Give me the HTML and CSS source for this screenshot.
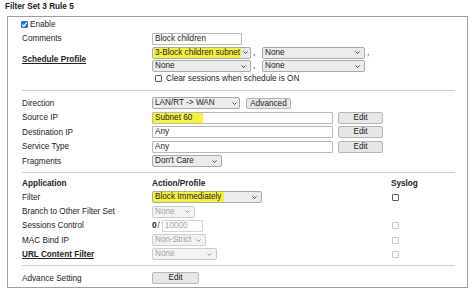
FILE: index.html
```html
<!DOCTYPE html>
<html>
<head>
<meta charset="utf-8">
<link rel="stylesheet" href="styles.css">
</head>
<body>
<div class="title">Filter Set 3 Rule 5</div>
<div class="panel">
  <div class="sec s1">
    <div class="row r-enable">
      <span class="cb on"><svg viewBox="0 0 7 7" width="7" height="7"><polyline points="1.3,3.6 2.9,5.2 5.8,1.7" fill="none" stroke="#fff" stroke-width="1.3"/></svg></span>
      <span class="enable-txt">Enable</span>
    </div>
    <div class="row r-comments">
      <div class="lbl">Comments</div>
      <div class="inp w-comments">Block children</div>
    </div>
    <div class="row r-sched">
      <div class="lbl bu">Schedule Profile</div>
      <div class="sched">
        <div class="sline">
          <div class="sel w-s1 tight"><span class="hl hl-s1">3-Block children subnet</span><svg class="chev" viewBox="0 0 5 3" width="5" height="3"><polyline points="0.5,0.5 2.5,2.5 4.5,0.5" fill="none" stroke="#333" stroke-width="0.9"/></svg></div>
          <span class="comma">,</span>
          <div class="sel w-s2"><span>None</span><svg class="chev" viewBox="0 0 5 3" width="5" height="3"><polyline points="0.5,0.5 2.5,2.5 4.5,0.5" fill="none" stroke="#333" stroke-width="0.9"/></svg></div>
          <span class="comma">,</span>
        </div>
        <div class="sline">
          <div class="sel w-s1"><span>None</span><svg class="chev" viewBox="0 0 5 3" width="5" height="3"><polyline points="0.5,0.5 2.5,2.5 4.5,0.5" fill="none" stroke="#333" stroke-width="0.9"/></svg></div>
          <span class="comma">,</span>
          <div class="sel w-s2"><span>None</span><svg class="chev" viewBox="0 0 5 3" width="5" height="3"><polyline points="0.5,0.5 2.5,2.5 4.5,0.5" fill="none" stroke="#333" stroke-width="0.9"/></svg></div>
        </div>
      </div>
    </div>
    <div class="row r-clear">
      <div class="lbl"></div>
      <span class="cb clear-cb"></span>
      <span>Clear sessions when schedule is ON</span>
    </div>
  </div>

  <div class="sec s2">
    <div class="row r2">
      <div class="lbl">Direction</div>
      <div class="sel w-dir tight"><span>LAN/RT -&gt; WAN</span><svg class="chev" viewBox="0 0 5 3" width="5" height="3"><polyline points="0.5,0.5 2.5,2.5 4.5,0.5" fill="none" stroke="#333" stroke-width="0.9"/></svg></div>
      <div class="btn w-adv">Advanced</div>
    </div>
    <div class="row r2">
      <div class="lbl">Source IP</div>
      <div class="inp w-ip hlwrap"><span class="hl hl-ip">Subnet 60</span></div>
      <div class="btn w-edit">Edit</div>
    </div>
    <div class="row r2">
      <div class="lbl">Destination IP</div>
      <div class="inp w-ip">Any</div>
      <div class="btn w-edit">Edit</div>
    </div>
    <div class="row r2">
      <div class="lbl">Service Type</div>
      <div class="inp w-ip">Any</div>
      <div class="btn w-edit">Edit</div>
    </div>
    <div class="row r2">
      <div class="lbl">Fragments</div>
      <div class="sel w-frag"><span>Don't Care</span><svg class="chev" viewBox="0 0 5 3" width="5" height="3"><polyline points="0.5,0.5 2.5,2.5 4.5,0.5" fill="none" stroke="#333" stroke-width="0.9"/></svg></div>
    </div>
  </div>

  <div class="sec s3">
    <div class="row3 head">
      <div class="lbl b">Application</div>
      <div class="act b">Action/Profile</div>
      <div class="sys b">Syslog</div>
    </div>
    <div class="row3">
      <div class="lbl">Filter</div>
      <div class="act"><div class="sel w-filter hlsel"><span class="hl hl-filter">Block Immediately</span><svg class="chev" viewBox="0 0 5 3" width="5" height="3"><polyline points="0.5,0.5 2.5,2.5 4.5,0.5" fill="none" stroke="#333" stroke-width="0.9"/></svg></div></div>
      <div class="sys"><span class="cb"></span></div>
    </div>
    <div class="row3">
      <div class="lbl">Branch to Other Filter Set</div>
      <div class="act"><div class="sel dis w-branch"><span>None</span><svg class="chev" viewBox="0 0 5 3" width="5" height="3"><polyline points="0.5,0.5 2.5,2.5 4.5,0.5" fill="none" stroke="#888" stroke-width="0.9"/></svg></div></div>
      <div class="sys"></div>
    </div>
    <div class="row3">
      <div class="lbl">Sessions Control</div>
      <div class="act"><span class="b">0</span><span class="slash">/</span><div class="inp dis w-sess">10000</div></div>
      <div class="sys"><span class="cb dis"></span></div>
    </div>
    <div class="row3">
      <div class="lbl">MAC Bind IP</div>
      <div class="act"><div class="sel dis w-mac"><span>Non-Strict</span><svg class="chev" viewBox="0 0 5 3" width="5" height="3"><polyline points="0.5,0.5 2.5,2.5 4.5,0.5" fill="none" stroke="#888" stroke-width="0.9"/></svg></div></div>
      <div class="sys"><span class="cb dis"></span></div>
    </div>
    <div class="row3">
      <div class="lbl bu">URL Content Filter</div>
      <div class="act"><div class="sel dis w-url"><span>None</span><svg class="chev" viewBox="0 0 5 3" width="5" height="3"><polyline points="0.5,0.5 2.5,2.5 4.5,0.5" fill="none" stroke="#888" stroke-width="0.9"/></svg></div></div>
      <div class="sys"><span class="cb dis"></span></div>
    </div>
  </div>

  <div class="sec s4">
    <div class="row r4">
      <div class="lbl">Advance Setting</div>
      <div class="btn w-adv-edit">Edit</div>
    </div>
  </div>
</div>
</body>
</html>
```

FILE: styles.css
```css
* { box-sizing: border-box; }
body {
  margin: 0;
  font-family: "Liberation Sans", Arial, sans-serif;
  font-size: 8.2px;
  color: #222;
  background: #fff;
}
.title {
  font-weight: bold;
  height: 16px;
  padding: 2px 0 0 5px;
  line-height: 10px;
  color: #1a1a1a;
}
.panel {
  margin-left: 7px;
  width: 461px;
  height: 272px;
  border: 1px solid #9e9e9e;
}
.sec { margin: 0 12px 0 14px; }
.sec + .sec { border-top: 1px solid #d0d0d0; }
.s1 { padding-bottom: 7px; }
.s2 { padding: 5px 0 3.5px; }
.s3 { padding: 3px 0 3.5px; }
.s4 { padding-top: 5px; }

.row { display: flex; align-items: center; }
.lbl { width: 130px; flex: none; white-space: nowrap; }
.b { font-weight: bold; }
.bu { font-weight: bold; text-decoration: underline; }

.r-enable { height: 14px; }
.enable-txt { margin-left: 2px; }
.r-comments { height: 15px; }
.r-sched { height: 27px; }
.sched { display: flex; flex-direction: column; justify-content: center; gap: 1.5px; }
.sline { display: flex; align-items: center; }
.comma { width: 11px; padding-left: 2px; line-height: 10px; }
.r-clear { height: 10px; }
.clear-cb { margin-left: 3px; margin-right: 4px; }

.r2 { height: 14.5px; }
.r4 { height: 14px; }

.row3 {
  display: grid;
  grid-template-columns: 130px 239px 1fr;
  align-items: center;
  height: 14.25px;
}
.act { display: flex; align-items: center; }
.sys { display: flex; align-items: center; }
.sys .cb { margin-left: 1px; }
.slash { margin: 0 2px 0 1px; color: #444; }

/* controls */
.sel {
  height: 12px;
  border: 1px solid #a9a9a9;
  border-radius: 2px;
  background: #ececec;
  padding-left: 2px;
  display: flex;
  align-items: center;
  justify-content: space-between;
  line-height: 10px;
  white-space: nowrap;
  overflow: hidden;
  flex: none;
}
.sel .chev { flex: none; margin-right: 4px; margin-left: 2px; }
.sel.tight .chev { margin-right: 2px; }
.sel.dis { background: #f3f3f3; border-color: #cdcdcd; color: #a0a0a0; }
.inp {
  height: 12px;
  border: 1px solid #b8b8b8;
  border-radius: 1px;
  background: #fff;
  padding-left: 2px;
  line-height: 10px;
  white-space: nowrap;
  flex: none;
}
.inp.dis { border-color: #d2d2d2; color: #a0a0a0; }
.btn {
  height: 12px;
  border: 1px solid #b5b5b5;
  border-radius: 2px;
  background: #e7e7e7;
  text-align: center;
  line-height: 10px;
  color: #222;
  flex: none;
}
.cb {
  display: inline-block;
  width: 7px;
  height: 7px;
  border: 1px solid #5a5a5a;
  border-radius: 1px;
  background: #fff;
  flex: none;
}
.cb svg { display: block; }
.cb.on { background: #2c6fd6; border-color: #2c6fd6; margin-left: -1px; position: relative; }
.cb.on svg { margin: -1px; }
.cb.dis { border-color: #c6c6c6; }

.hl { background: #f5f23a; display: block; height: 10px; }
.hl-s1 { flex: 1; margin-left: -1px; padding-left: 1px; }
.hlwrap { padding-left: 0; }
.hl-ip { width: 50px; padding-left: 2px; }
.hlsel { padding-left: 0; }
.hl-filter { width: 71px; padding-left: 2px; }

/* widths */
.w-comments { width: 90px; }
.w-s1 { width: 99px; }
.w-s2 { width: 103px; }
.w-dir { width: 88px; }
.w-adv { width: 45px; margin-left: 6px; height: 11.5px; }
.w-ip { width: 181px; }
.w-edit { width: 45px; margin-left: 5px; }
.w-frag { width: 70px; }
.w-filter { width: 110px; }
.w-branch { width: 43px; }
.w-sess { width: 41px; }
.w-mac { width: 54px; }
.w-url { width: 65px; }
.w-adv-edit { width: 47px; }
```
